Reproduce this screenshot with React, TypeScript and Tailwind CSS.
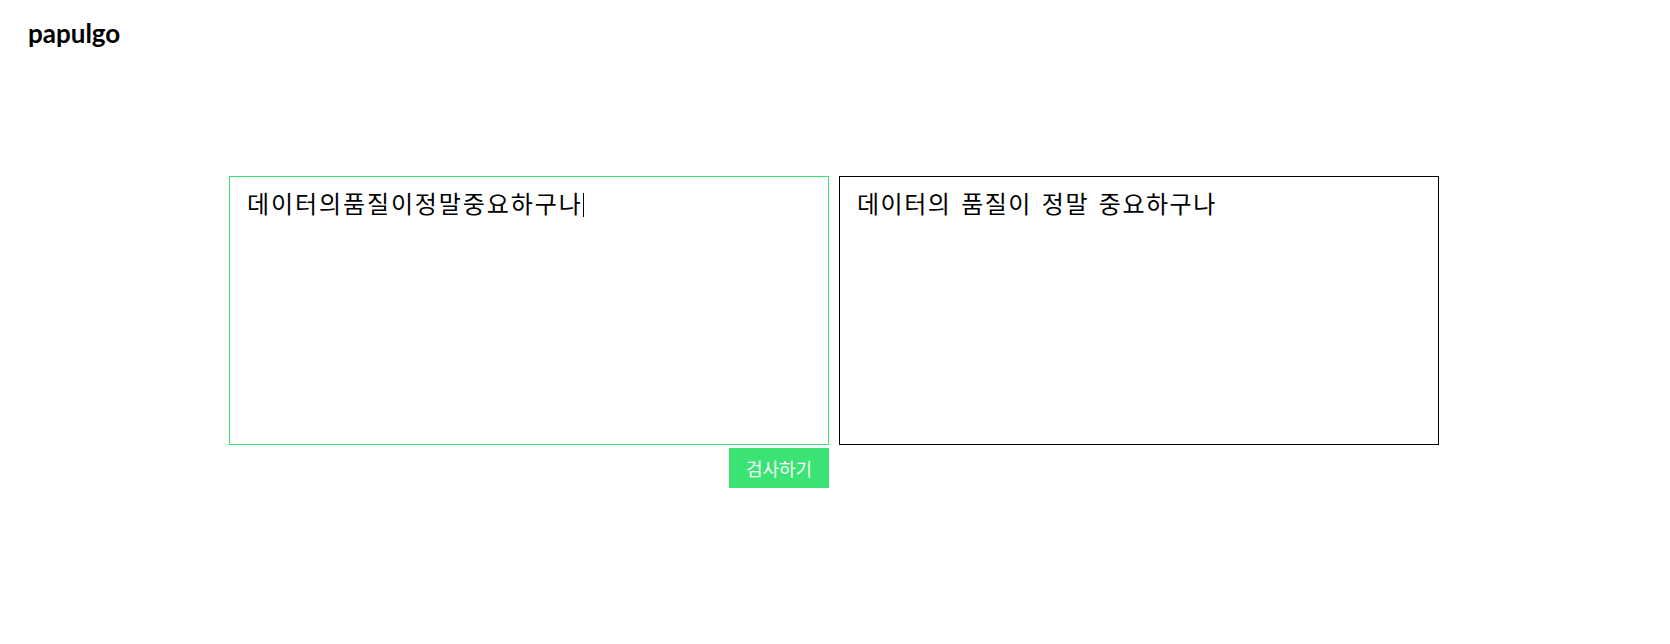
export default function App() {
  const sample = "데이터의품질이정말중요하구나";
  const fixedText = "데이터의 품질이 정말 중요하구나";

  return (
    <div className="min-h-screen bg-white text-black [font-family:'Noto_Sans_CJK_KR',sans-serif]">
      {/* Header */}
      <header className="px-[28px] pt-[20px]">
        <h1 className="text-[26px] font-bold leading-none [font-family:Lato,'Noto_Sans',sans-serif]">
          papulgo
        </h1>
      </header>

      {/* Checker */}
      <main className="mt-[130px] flex justify-center gap-[10px] pr-[2px]">
        <div className="flex flex-col items-end">
          <div className="w-[600px] h-[269px] border border-[#3ae374] px-[17px] pt-[10px] text-[24px] font-normal leading-[1.3] tracking-[1.9px]">
            {sample}
            <span className="inline-block w-px h-[24px] bg-black align-[-4px]" />
          </div>
          <button className="mt-[3px] w-[100px] h-[40px] bg-[#3ae374] text-white text-[18px]">
            검사하기
          </button>
        </div>

        <div className="w-[600px] h-[269px] border border-black px-[17px] pt-[10px] text-[24px] font-normal leading-[1.3] tracking-[1.5px] [word-spacing:3px]">
          {fixedText}
        </div>
      </main>
    </div>
  );
}
